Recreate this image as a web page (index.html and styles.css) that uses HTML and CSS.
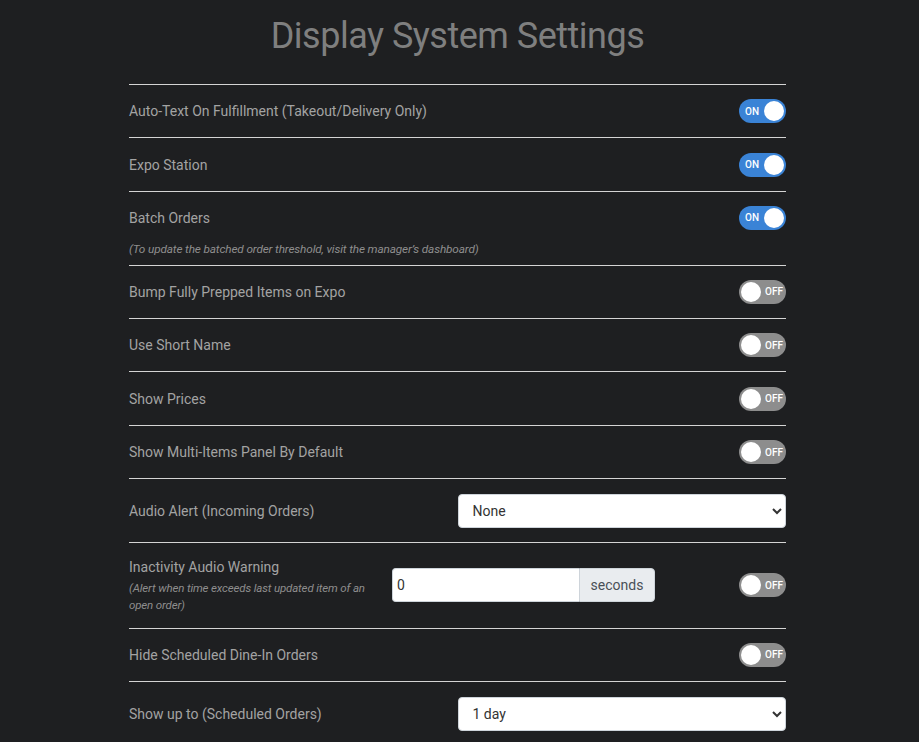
FILE: index.html
```html
<!DOCTYPE html>
<html lang="en">
<head>
<meta charset="utf-8">
<title>Display System Settings</title>
<link rel="stylesheet" href="styles.css">
</head>
<body>
<main class="page">
  <h1 class="title">Display System Settings</h1>
  <div class="settings">
    <div class="row">
      <span class="label">Auto-Text On Fulfillment (Takeout/Delivery Only)</span>
      <span class="toggle on"><span class="toggle-text">ON</span><span class="knob"></span></span>
    </div>
    <div class="row">
      <span class="label">Expo Station</span>
      <span class="toggle on"><span class="toggle-text">ON</span><span class="knob"></span></span>
    </div>
    <div class="row row-stack">
      <div class="row-head">
        <span class="label">Batch Orders</span>
        <span class="toggle on"><span class="toggle-text">ON</span><span class="knob"></span></span>
      </div>
      <div class="note">(To update the batched order threshold, visit the manager’s dashboard)</div>
    </div>
    <div class="row">
      <span class="label">Bump Fully Prepped Items on Expo</span>
      <span class="toggle off"><span class="knob"></span><span class="toggle-text">OFF</span></span>
    </div>
    <div class="row">
      <span class="label">Use Short Name</span>
      <span class="toggle off"><span class="knob"></span><span class="toggle-text">OFF</span></span>
    </div>
    <div class="row">
      <span class="label">Show Prices</span>
      <span class="toggle off"><span class="knob"></span><span class="toggle-text">OFF</span></span>
    </div>
    <div class="row">
      <span class="label">Show Multi-Items Panel By Default</span>
      <span class="toggle off"><span class="knob"></span><span class="toggle-text">OFF</span></span>
    </div>
    <div class="row row-select">
      <span class="label half">Audio Alert (Incoming Orders)</span>
      <select class="select half"><option>None</option></select>
    </div>
    <div class="row row-input">
      <div class="label-block">
        <div class="label">Inactivity Audio Warning</div>
        <div class="note note-tight">(Alert when time exceeds last updated item of an open order)</div>
      </div>
      <div class="input-group">
        <input class="input" type="text" value="0">
        <span class="addon">seconds</span>
      </div>
      <span class="toggle off"><span class="knob"></span><span class="toggle-text">OFF</span></span>
    </div>
    <div class="row">
      <span class="label">Hide Scheduled Dine-In Orders</span>
      <span class="toggle off"><span class="knob"></span><span class="toggle-text">OFF</span></span>
    </div>
    <div class="row row-select">
      <span class="label half">Show up to (Scheduled Orders)</span>
      <select class="select half"><option>1 day</option></select>
    </div>
  </div>
</main>
</body>
</html>
```

FILE: styles.css
```css
html, body {
  margin: 0;
  padding: 0;
  background: #1e1f21;
}
body {
  font-family: Roboto, "Liberation Sans", sans-serif;
  color: #a3a3a3;
}
.page {
  width: 657px;
  margin: 0 0 0 129px;
}
.title {
  margin: 0;
  padding-top: 12px;
  height: 84px;
  box-sizing: border-box;
  text-align: center;
  font-weight: 400;
  font-size: 36px;
  line-height: 48px;
  letter-spacing: -0.5px;
  color: #7f7f7f;
}
.settings {
  border-top: 1px solid #d4d4d4;
}
.row {
  display: flex;
  align-items: center;
  justify-content: space-between;
  padding: 14.2px 0;
  border-bottom: 1px solid #d4d4d4;
}
.row-stack {
  display: block;
  padding-bottom: 7.8px;
}
.row-head {
  display: flex;
  align-items: center;
  justify-content: space-between;
}
.label {
  font-size: 14px;
  line-height: 20px;
  letter-spacing: 0;
  color: #a3a3a3;
}
.note {
  margin-top: 11px;
  font-size: 11.8px;
  line-height: 16px;
  font-style: italic;
  color: #8e8e8e;
  letter-spacing: -0.15px;
}
.note-tight {
  margin-top: 3px;
  font-size: 11.5px;
  line-height: 16.5px;
}
.toggle {
  display: inline-flex;
  align-items: center;
  box-sizing: border-box;
  width: 47px;
  height: 24px;
  border-radius: 12px;
  padding: 2px;
  flex: none;
}
.toggle.on {
  background: #3a83d6;
  justify-content: space-between;
  padding-left: 6px;
}
.toggle.off {
  background: #8d8d8d;
  justify-content: space-between;
  padding-right: 3px;
}
.knob {
  width: 20px;
  height: 20px;
  border-radius: 50%;
  background: #ffffff;
}
.toggle-text {
  font-size: 10px;
  font-weight: 500;
  color: #ffffff;
  letter-spacing: 0;
}
.row-select {
  padding: 15px 0 14px;
}
.half {
  width: 50%;
}
.select {
  box-sizing: border-box;
  height: 34px;
  padding: 0 8px 0 10px;
  font-family: Roboto, "Liberation Sans", sans-serif;
  font-size: 14px;
  color: #333;
  background: #ffffff;
  border: 1px solid #ced4da;
  border-radius: 4px;
}
.row-input {
  justify-content: flex-start;
}
.label-block {
  width: 247px;
  margin-right: 16px;
  min-height: 55.6px;
}
.input-group {
  display: flex;
  width: 263px;
  height: 34px;
}
.input {
  box-sizing: border-box;
  width: 187px;
  height: 34px;
  padding: 0 4px;
  font-family: Roboto, "Liberation Sans", sans-serif;
  font-size: 14px;
  color: #333;
  background: #fff;
  border: 1px solid #ced4da;
  border-right: none;
  border-radius: 4px 0 0 4px;
  outline: none;
}
.addon {
  display: flex;
  align-items: center;
  justify-content: center;
  box-sizing: border-box;
  width: 76px;
  height: 34px;
  font-size: 14px;
  color: #495057;
  background: #e9ecef;
  border: 1px solid #ced4da;
  border-radius: 0 4px 4px 0;
}
.row-input .toggle {
  margin-left: auto;
}
```
